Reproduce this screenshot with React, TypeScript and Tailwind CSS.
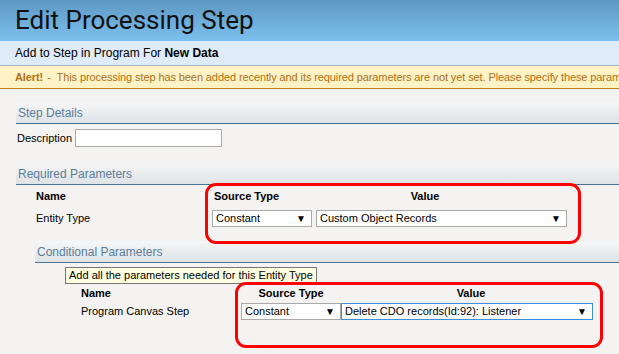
import React from "react";

const Select = ({
  value,
  width,
  focused,
}: {
  value: string;
  width: string;
  focused?: boolean;
}) => {
  return (
    <div
      className={`${width} h-[17px] bg-white flex items-center justify-between pl-[3px] pr-[5px] border ${
        focused ? "border-[#3e8ede]" : "border-[#a9a9a9]"
      }`}
    >
      <span className="text-[11px] leading-none text-black">{value}</span>
      <span className="text-[10px] leading-none text-black">▼</span>
    </div>
  );
};

const SectionHeader = ({ title, indent }: { title: string; indent?: string }) => {
  return (
    <div
      className={`${indent ?? ""} h-[22px] flex items-center pl-[2px] bg-gradient-to-b from-[#f5f6f7] to-[#dfe3e6] border-b border-[#4a7190]`}
    >
      <span className="text-[12px] text-[#5a7c99]">{title}</span>
    </div>
  );
};

const App = () => {
  return (
    <div
      className="relative w-[619px] h-[354px] overflow-hidden bg-[#f4f3f1] text-black"
      style={{ fontFamily: '"Liberation Sans", Arial, sans-serif' }}
    >
      {/* title */}
      <div className="h-[41px] pl-[15px] flex items-center bg-gradient-to-b from-[#5e98c3] to-[#7cc0ee]">
        <h1
          className="text-[26px] leading-none text-[#111] pb-[1px]"
          style={{ fontFamily: "Roboto, sans-serif" }}
        >
          Edit Processing Step
        </h1>
      </div>

      {/* subtitle */}
      <div className="h-[25px] pl-[15px] flex items-center bg-[#dfebf8] border-b border-[#a6b7c7] text-[12px]">
        Add to Step in Program For&nbsp;<b>New Data</b>
      </div>

      {/* alert */}
      <div className="h-[23px] pl-[15px] flex items-center bg-[#fff3c6] border-b border-[#c07b1c] text-[11px] text-[#b26f14] whitespace-nowrap tracking-[-0.1px]">
        <b>Alert!</b>
        <span className="ml-[4px]">-&nbsp;&nbsp;This processing step has been added recently and its required parameters are not yet set. Please specify these parameters.</span>
      </div>

      <div className="pl-4 pt-[13px]">
        <SectionHeader title="Step Details" />

        <div className="flex items-center h-[18px] mt-[5px] pl-[1px] text-[11px]">
          <span className="w-[58px]">Description</span>
          <div className="w-[147px] h-[18px] bg-white border border-[#a9a9a9]" />
        </div>

        <div className="mt-[16px]">
          <SectionHeader title="Required Parameters" />
        </div>

        {/* required table */}
        <div className="pl-[20px] text-[11px]">
          <div className="flex items-center h-[22px] font-bold">
            <span className="w-[176px]">Name</span>
            <span className="w-[104px] pl-[2px]">Source Type</span>
            <span className="w-[250px] text-center pr-[32px]">Value</span>
          </div>
          <div className="flex items-center h-[21px] mt-[1px]">
            <span className="w-[176px]">Entity Type</span>
            <div className="w-[104px]">
              <Select value="Constant" width="w-[100px]" />
            </div>
            <Select value="Custom Object Records" width="w-[251px]" />
          </div>
        </div>

        {/* conditional */}
        <div className="mt-[12px]">
          <SectionHeader title="Conditional Parameters" indent="ml-[19px]" />
        </div>

        <div className="pl-[49px] mt-[4px] text-[11px]">
          <div className="inline-block h-[17px] leading-[15px] px-[3px] bg-[#ffffe1] border border-[#767676] text-[11px]">
            Add all the parameters needed for this Entity Type
          </div>
          <div className="pl-[16px]">
            <div className="flex items-center h-[19px] font-bold">
              <span className="w-[160px]">Name</span>
              <span className="w-[100px] text-center">Source Type</span>
              <span className="w-[252px] text-center pl-[8px]">Value</span>
            </div>
            <div className="flex items-center h-[17px]">
              <span className="w-[160px]">Program Canvas Step</span>
              <Select value="Constant" width="w-[100px]" />
              <Select value="Delete CDO records(Id:92): Listener" width="w-[252px]" focused />
            </div>
          </div>
        </div>
      </div>

      {/* annotation outlines */}
      <div className="absolute left-[205px] top-[183px] w-[376px] h-[61px] border-[3px] border-[#ff0000] rounded-[11px]" />
      <div className="absolute left-[235px] top-[282px] w-[368px] h-[66px] border-[3px] border-[#ff0000] rounded-[11px]" />
    </div>
  );
};

export default App;
